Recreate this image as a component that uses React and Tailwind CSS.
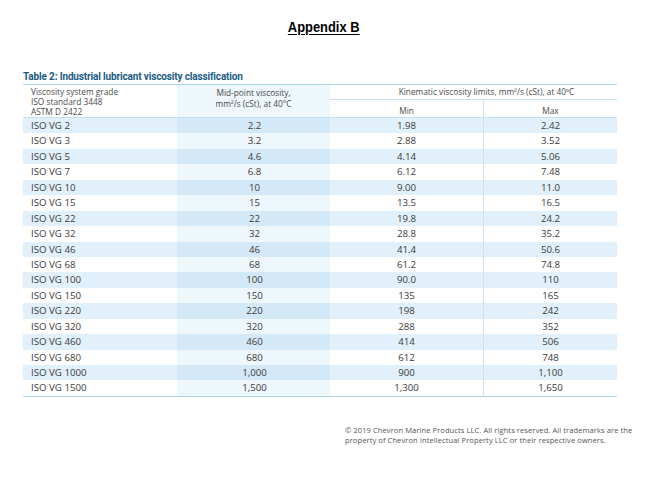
import React from 'react';

const rows = [
  ['ISO VG 2', '2.2', '1.98', '2.42'],
  ['ISO VG 3', '3.2', '2.88', '3.52'],
  ['ISO VG 5', '4.6', '4.14', '5.06'],
  ['ISO VG 7', '6.8', '6.12', '7.48'],
  ['ISO VG 10', '10', '9.00', '11.0'],
  ['ISO VG 15', '15', '13.5', '16.5'],
  ['ISO VG 22', '22', '19.8', '24.2'],
  ['ISO VG 32', '32', '28.8', '35.2'],
  ['ISO VG 46', '46', '41.4', '50.6'],
  ['ISO VG 68', '68', '61.2', '74.8'],
  ['ISO VG 100', '100', '90.0', '110'],
  ['ISO VG 150', '150', '135', '165'],
  ['ISO VG 220', '220', '198', '242'],
  ['ISO VG 320', '320', '288', '352'],
  ['ISO VG 460', '460', '414', '506'],
  ['ISO VG 680', '680', '612', '748'],
  ['ISO VG 1000', '1,000', '900', '1,100'],
  ['ISO VG 1500', '1,500', '1,300', '1,650'],
];

const App = () => {
  return (
    <div className="w-[665px] h-[498px] bg-white text-[#3b3b3b]" style={{ fontFamily: "'Open Sans', 'Liberation Sans', sans-serif" }}>
      {/* Title */}
      <div className="pt-[14px] pr-[18px] text-center">
        <span
          className="inline-block scale-x-[0.86] text-[15px] leading-[20px] font-bold text-black underline underline-offset-2"
          style={{ fontFamily: "'Liberation Sans', Arial, sans-serif" }}
        >
          Appendix B
        </span>
      </div>

      <div className="ml-[23px] w-[594px] mt-[33px]">
        {/* Caption */}
        <div className="text-[10px] leading-[12px] font-bold tracking-[-0.15px] text-[#1b5a86] mb-[1px]" style={{ fontFamily: "Roboto, 'Liberation Sans', sans-serif" }}>
          Table 2: Industrial lubricant viscosity classification
        </div>

        {/* Table */}
        <div className="border-t border-b border-[#a8d3ec]">
          {/* Header */}
          <div className="grid grid-cols-[154px_153px_154px_133px] grid-rows-[15px_17px] border-b border-[#c2e1f3] text-[8.3px] text-[#4a4a4a]">
            <div className="row-span-2 pl-[8px] pt-[1.5px] leading-[10px]">
              <div>Viscosity system grade</div>
              <div>ISO standard 3448</div>
              <div>ASTM D 2422</div>
            </div>
            <div className="row-span-2 bg-[#eef7fc] text-center pt-[1.5px] leading-[11px]">
              <div>Mid-point viscosity,</div>
              <div>mm²/s (cSt), at 40°C</div>
            </div>
            <div className="col-span-2 border-b border-[#c2e1f3] flex items-center justify-center pl-[26px] leading-[10px]">
              Kinematic viscosity limits, mm²/s (cSt), at 40ºC
            </div>
            <div className="border-r border-[#c8e3f3] flex items-end justify-center pb-[1px] leading-[10px]">Min</div>
            <div className="flex items-end justify-center pb-[1px] leading-[10px]">Max</div>
          </div>

          {/* Body */}
          {rows.map((r, i) => {
            const blue = i % 2 === 0;
            return (
              <div
                key={r[0]}
                className={`grid grid-cols-[154px_153px_154px_133px] h-[15.45px] text-[9.7px] leading-[15px] ${blue ? 'bg-[#e1f0fa]' : 'bg-white'}`}
              >
                <div className="pl-[8px]">{r[0]}</div>
                <div className={`text-center pl-[2px] ${blue ? 'bg-[#d3e9f7]' : 'bg-[#eef7fc]'}`}>{r[1]}</div>
                <div className="text-center border-r border-[#c8e3f3]">{r[2]}</div>
                <div className="text-center">{r[3]}</div>
              </div>
            );
          })}
        </div>
      </div>

      {/* Footer */}
      <div className="ml-[345px] mt-[28px] text-[7.5px] leading-[10px] text-[#555] tracking-[0.1px]">
        <div>© 2019 Chevron Marine Products LLC. All rights reserved. All trademarks are the</div>
        <div>property of Chevron Intellectual Property LLC or their respective owners.</div>
      </div>
    </div>
  );
};

export default App;
